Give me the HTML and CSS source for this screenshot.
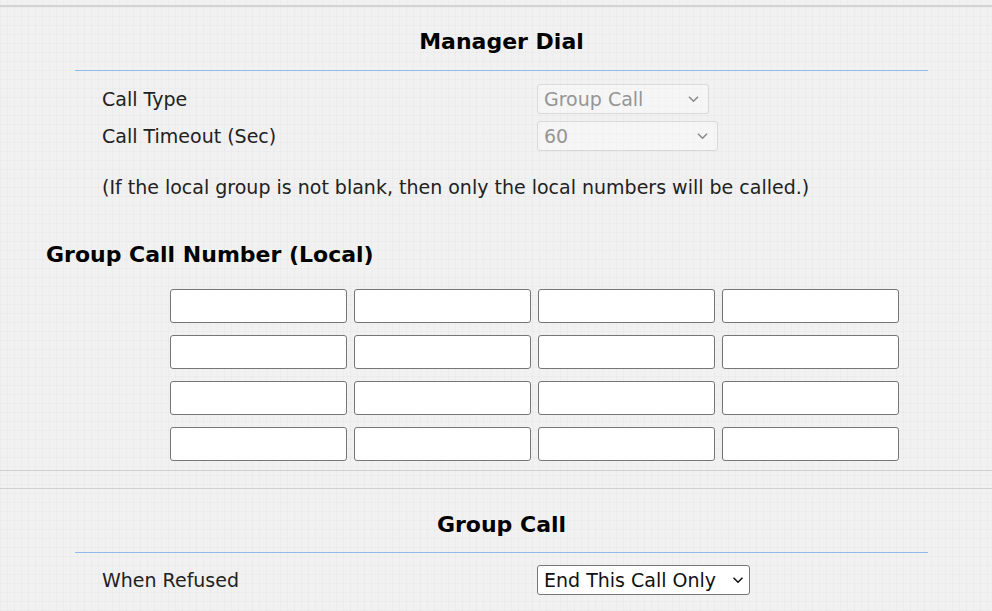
FILE: index.html
```html
<!DOCTYPE html>
<html lang="en">
<head>
<meta charset="utf-8">
<title>Manager Dial</title>
<link rel="stylesheet" href="styles.css">
</head>
<body>
<div class="page">
  <div class="rule-top"></div>

  <section class="panel">
    <h2 class="panel-title">Manager Dial</h2>
    <div class="field-list">
      <div class="field">
        <span class="field-label">Call Type</span>
        <div class="select is-disabled w-type"><span>Group Call</span><svg class="caret" viewBox="0 0 12 8"><path d="M1.5 1.8 6 6.2 10.5 1.8"/></svg></div>
      </div>
      <div class="field">
        <span class="field-label">Call Timeout (Sec)</span>
        <div class="select is-disabled w-timeout"><span>60</span><svg class="caret" viewBox="0 0 12 8"><path d="M1.5 1.8 6 6.2 10.5 1.8"/></svg></div>
      </div>
    </div>
    <p class="note">(If the local group is not blank, then only the local numbers will be called.)</p>
  </section>

  <section class="group-local">
    <h3 class="sub-title">Group Call Number (Local)</h3>
    <div class="number-grid">
      <input class="num" type="text"><input class="num" type="text"><input class="num" type="text"><input class="num" type="text">
      <input class="num" type="text"><input class="num" type="text"><input class="num" type="text"><input class="num" type="text">
      <input class="num" type="text"><input class="num" type="text"><input class="num" type="text"><input class="num" type="text">
      <input class="num" type="text"><input class="num" type="text"><input class="num" type="text"><input class="num" type="text">
    </div>
  </section>

  <div class="rule-split"></div>

  <section class="panel panel-group">
    <h2 class="panel-title">Group Call</h2>
    <div class="field-list">
      <div class="field">
        <span class="field-label">When Refused</span>
        <div class="select w-refused"><span>End This Call Only</span><svg class="caret" viewBox="0 0 12 8"><path d="M1.5 1.8 6 6.2 10.5 1.8"/></svg></div>
      </div>
    </div>
  </section>
</div>
</body>
</html>
```
FILE: styles.css
```css
* { box-sizing: border-box; }

html, body {
  margin: 0;
  padding: 0;
}

body {
  background-color: #f1f1f1;
  background-image:
    repeating-linear-gradient(90deg, rgba(0,0,0,0.018) 0 1px, transparent 1px 7px),
    repeating-linear-gradient(0deg, rgba(0,0,0,0.018) 0 1px, transparent 1px 9px);
  font-family: "DejaVu Sans", "Liberation Sans", sans-serif;
  color: #222;
  font-size: 19px;
}

.page {
  width: 992px;
  height: 611px;
  overflow: hidden;
}

.rule-top {
  height: 8px;
  border-bottom: 2px solid #d3d3d3;
  margin-top: -1px;
}

.panel {
  padding: 0 64px 0 75px;
}

.panel-title {
  margin: 0;
  height: 64px;
  padding-top: 23px;
  text-align: center;
  font-size: 22px;
  font-weight: bold;
  color: #000;
  line-height: 24px;
  border-bottom: 1px solid #92b9ec;
}

.field-list {
  display: flex;
  flex-direction: column;
  gap: 7px;
  padding-top: 13px;
  padding-left: 27px;
}

.field {
  display: flex;
  align-items: center;
  height: 30px;
}

.field-label {
  width: 435px;
  flex: none;
}

.select {
  height: 30px;
  display: flex;
  align-items: center;
  justify-content: space-between;
  padding: 0 8px 0 6px;
  border: 1px solid #777;
  border-radius: 3px;
  background: #fff;
  color: #111;
}

.select.is-disabled {
  border-color: #d9d9d9;
  background: rgba(255,255,255,0.35);
  color: #959595;
}

.caret {
  width: 12px;
  height: 8px;
  flex: none;
  fill: none;
  stroke: currentColor;
  stroke-width: 1.6;
}

.is-disabled .caret { stroke: #8a8a8a; width: 13px; }

.w-type { width: 172px; }
.w-timeout { width: 181px; }
.w-refused { width: 213px; padding-right: 5px; }

.note {
  margin: 24px 0 0 27px;
  line-height: 24px;
}

.group-local {
  padding-top: 44px;
}

.sub-title {
  margin: 0 0 0 46px;
  font-size: 22px;
  font-weight: bold;
  color: #000;
  line-height: 24px;
}

.number-grid {
  display: grid;
  grid-template-columns: repeat(4, 177px);
  column-gap: 7px;
  row-gap: 12px;
  margin: 22px 0 0 170px;
}

.num {
  height: 34px;
  width: 177px;
  margin: 0;
  border: 1px solid #767676;
  border-radius: 3px;
  background: #fff;
  font: inherit;
}

.rule-split {
  margin-top: 9px;
  height: 19px;
  border-top: 1px solid #d0d0d0;
  border-bottom: 1px solid #d0d0d0;
}

.panel-group .panel-title {
  height: 64px;
  padding-top: 24px;
}

.panel-group .field-list {
  padding-top: 12px;
}
```
